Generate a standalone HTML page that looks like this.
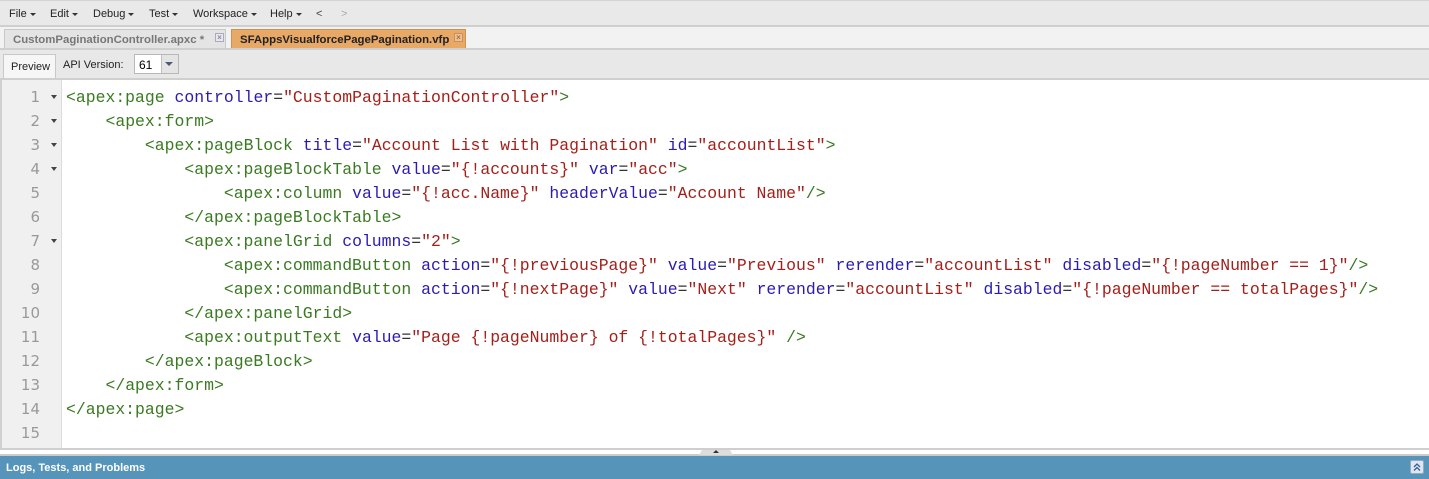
<!DOCTYPE html>
<html><head><meta charset="utf-8"><style>
*{margin:0;padding:0;box-sizing:border-box}
body{width:1429px;height:479px;overflow:hidden;background:#fff;font-family:"Liberation Sans",Arial,sans-serif;position:relative}
.menu{position:absolute;left:0;top:0;width:1429px;height:25px;background:#e9e9e9;border-top:1px solid #d4d4d4;font-size:11px;color:#222}
.menu span{position:absolute;top:7px}
.caret{display:inline-block;width:0;height:0;border-left:3px solid transparent;border-right:3px solid transparent;border-top:3px solid #333;vertical-align:middle;margin-left:3px}
.b1{position:absolute;left:0;width:1429px;height:2px;background:#cfcfcf}
.tabs{position:absolute;left:0;top:27px;width:1429px;height:21px;background:#f2f2f2}
.tab{position:absolute;top:2px;height:19px;font-size:11.4px;font-weight:bold;padding:4px 0 0 8px;border:1px solid #c8c8c8;border-bottom:none}
.x{position:absolute;top:3px;width:9px;height:9px;border:1px solid #aab;background:#e8e8ef;font-size:8px;line-height:7px;text-align:center;color:#889}
.tool{position:absolute;left:0;top:50px;width:1429px;height:28px;background:#e8e8e8}
.editor{position:absolute;left:0;top:80px;width:1429px;height:368px;background:#fff}
.gutter{position:absolute;left:0;top:0;width:62px;height:368px;background:#f0f0f0;border-left:2px solid #d0d0d0;border-right:1px solid #dcdcdc}
.ln{position:absolute;left:0;width:38px;text-align:right;font-family:"DejaVu Sans","Liberation Sans",sans-serif;font-size:15px;color:#999}
.fold{position:absolute;left:49px;width:0;height:0;border-left:3px solid transparent;border-right:3px solid transparent;border-top:4px solid #444}
.code{position:absolute;left:66px;top:6px;font-family:"Liberation Mono",monospace;font-size:16.45px;line-height:24px;white-space:pre;color:#333}
.t{color:#3a7a22}.a{color:#2a1cb0}.s{color:#a3201a}
.bar{position:absolute;left:0;top:456px;width:1429px;height:23px;background:#5694b9;color:#fff;font-size:11px;font-weight:bold;padding:6px 0 0 6px}
</style></head><body>
<div class="menu">
<span style="left:9px">File<i class="caret"></i></span>
<span style="left:50px">Edit<i class="caret"></i></span>
<span style="left:93px">Debug<i class="caret"></i></span>
<span style="left:149px">Test<i class="caret"></i></span>
<span style="left:193px">Workspace<i class="caret"></i></span>
<span style="left:270px">Help<i class="caret"></i></span>
<span style="left:316px;color:#444">&lt;</span>
<span style="left:341px;color:#aaa">&gt;</span>
</div>
<div class="b1" style="top:25px"></div>
<div class="tabs">
<div class="tab" style="left:4px;width:222px;background:#e4e4e4;color:#777">CustomPaginationController.apxc *<span class="x" style="left:210px">×</span></div>
<div class="tab" style="left:231px;width:235px;background:#e8a866;color:#222;border-color:#d09050">SFAppsVisualforcePagePagination.vfp<span class="x" style="left:222px;background:#f0c090;border-color:#c89060;color:#a07040">×</span></div>
</div>
<div class="b1" style="top:48px"></div>
<div class="tool">
<div style="position:absolute;left:3px;top:4px;width:53px;height:24px;background:#f6f6f6;border:1px solid #c8c8c8;border-bottom:none;font-size:11px;color:#222;padding:6px 0 0 7px">Preview</div>
<div style="position:absolute;left:63px;top:9px;font-size:11px;color:#222">API Version:</div>
<div style="position:absolute;left:134px;top:4px;width:45px;height:20px;background:#fff;border:1px solid #b8b8b8;font-size:12px;padding:3px 0 0 4px">61
<div style="position:absolute;left:26px;top:0;width:17px;height:18px;background:#e4e4e4;border-left:1px solid #c0c0c0"><i class="caret" style="position:absolute;left:3px;top:7px;border-left-width:4px;border-right-width:4px;border-top:4px solid #4a5a7a;margin:0"></i></div></div>
</div>
<div class="b1" style="top:78px"></div>
<div class="editor">
<div class="gutter">
<div class="ln" style="top:8px">1</div><div class="ln" style="top:32px">2</div><div class="ln" style="top:56px">3</div><div class="ln" style="top:80px">4</div><div class="ln" style="top:104px">5</div><div class="ln" style="top:128px">6</div><div class="ln" style="top:152px">7</div><div class="ln" style="top:176px">8</div><div class="ln" style="top:200px">9</div><div class="ln" style="top:224px">10</div><div class="ln" style="top:248px">11</div><div class="ln" style="top:272px">12</div><div class="ln" style="top:296px">13</div><div class="ln" style="top:320px">14</div><div class="ln" style="top:344px">15</div>
<div class="fold" style="top:15px"></div><div class="fold" style="top:39px"></div><div class="fold" style="top:63px"></div><div class="fold" style="top:87px"></div><div class="fold" style="top:159px"></div>
</div>
<div class="code"><span class="t">&lt;apex:page</span> <span class="a">controller</span>=<span class="s">"CustomPaginationController"</span><span class="t">&gt;</span>
    <span class="t">&lt;apex:form&gt;</span>
        <span class="t">&lt;apex:pageBlock</span> <span class="a">title</span>=<span class="s">"Account List with Pagination"</span> <span class="a">id</span>=<span class="s">"accountList"</span><span class="t">&gt;</span>
            <span class="t">&lt;apex:pageBlockTable</span> <span class="a">value</span>=<span class="s">"{!accounts}"</span> <span class="a">var</span>=<span class="s">"acc"</span><span class="t">&gt;</span>
                <span class="t">&lt;apex:column</span> <span class="a">value</span>=<span class="s">"{!acc.Name}"</span> <span class="a">headerValue</span>=<span class="s">"Account Name"</span><span class="t">/&gt;</span>
            <span class="t">&lt;/apex:pageBlockTable&gt;</span>
            <span class="t">&lt;apex:panelGrid</span> <span class="a">columns</span>=<span class="s">"2"</span><span class="t">&gt;</span>
                <span class="t">&lt;apex:commandButton</span> <span class="a">action</span>=<span class="s">"{!previousPage}"</span> <span class="a">value</span>=<span class="s">"Previous"</span> <span class="a">rerender</span>=<span class="s">"accountList"</span> <span class="a">disabled</span>=<span class="s">"{!pageNumber == 1}"</span><span class="t">/&gt;</span>
                <span class="t">&lt;apex:commandButton</span> <span class="a">action</span>=<span class="s">"{!nextPage}"</span> <span class="a">value</span>=<span class="s">"Next"</span> <span class="a">rerender</span>=<span class="s">"accountList"</span> <span class="a">disabled</span>=<span class="s">"{!pageNumber == totalPages}"</span><span class="t">/&gt;</span>
            <span class="t">&lt;/apex:panelGrid&gt;</span>
            <span class="t">&lt;apex:outputText</span> <span class="a">value</span>=<span class="s">"Page {!pageNumber} of {!totalPages}"</span> <span class="t">/&gt;</span>
        <span class="t">&lt;/apex:pageBlock&gt;</span>
    <span class="t">&lt;/apex:form&gt;</span>
<span class="t">&lt;/apex:page&gt;</span>
</div>
</div>
<div class="b1" style="top:448px"></div>
<div style="position:absolute;left:0;top:450px;width:1429px;height:4px;background:#fff"></div>
<div class="b1" style="top:454px;height:2px;background:#ccc"></div>
<div style="position:absolute;left:699px;top:450px;width:34px;height:5px;background:#ddd;clip-path:polygon(3px 0,31px 0,34px 5px,0 5px)"></div>
<div style="position:absolute;left:713px;top:450px;width:0;height:0;border-left:3px solid transparent;border-right:3px solid transparent;border-bottom:3px solid #333"></div>
<div class="bar">Logs, Tests, and Problems
<div style="position:absolute;left:1410px;top:4px;width:14px;height:14px;background:#dbe7f5;border:1px solid #9ab;border-radius:2px">
<svg width="12" height="12" style="position:absolute;left:0;top:0"><path d="M3 6 L6 3 L9 6 M3 9.5 L6 6.5 L9 9.5" fill="none" stroke="#3a5f8f" stroke-width="1.3"/></svg></div>
</div>
</body></html>
